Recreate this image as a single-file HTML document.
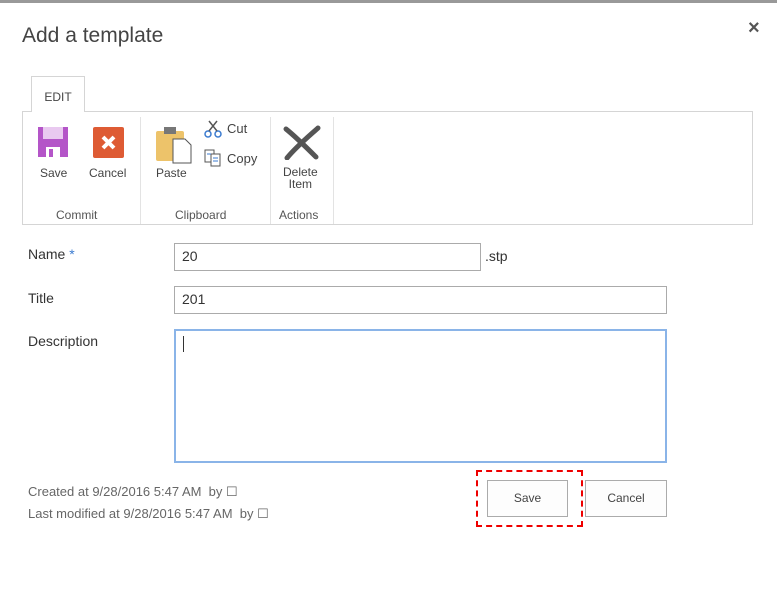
<!DOCTYPE html>
<html><head><style>
body{margin:0;width:777px;height:600px;background:#fff;font-family:"Liberation Sans",sans-serif;position:relative;overflow:hidden;color:#444}
.a{position:absolute}
.t{font-size:12px;color:#444}
.lbl{font-size:14px;color:#333}
.inp{position:absolute;border:1px solid #ababab;background:#fff;box-sizing:border-box;font-size:14px;color:#333;padding:4px 7px}
.btn{position:absolute;border:1px solid #ababab;background:#fdfdfd;box-sizing:border-box;font-size:12px;color:#444;text-align:center;line-height:34px}
</style></head><body>
<div class="a" style="left:0;top:0;width:777px;height:3px;background:#999"></div>
<div class="a" style="left:22px;top:24px;font-size:21px;color:#444">Add a template</div>
<div class="a" style="left:748px;top:17px;font-size:20px;color:#555;font-weight:bold">×</div>
<div class="a" style="left:22px;top:111px;width:731px;height:114px;border:1px solid #d5d5d5;box-sizing:border-box"></div>
<div class="a" style="left:31px;top:76px;width:54px;height:36px;border:1px solid #d5d5d5;border-bottom:none;background:#fff;box-sizing:border-box;font-size:12px;text-align:center;line-height:40px;color:#444">EDIT</div>
<div class="a" style="left:140px;top:117px;width:1px;height:107px;background:#e3e3e3"></div>
<div class="a" style="left:270px;top:117px;width:1px;height:107px;background:#e3e3e3"></div>
<div class="a" style="left:333px;top:117px;width:1px;height:107px;background:#e3e3e3"></div>
<svg class="a" style="left:37px;top:126px" width="32" height="32"><rect x="1" y="1" width="30" height="30" fill="#b455c8"/><rect x="6" y="1" width="20" height="12" fill="#e9c9f0"/><rect x="9" y="21" width="14" height="10" fill="#fff"/><rect x="12" y="23" width="4" height="8" fill="#b455c8"/></svg>
<svg class="a" style="left:93px;top:127px" width="31" height="31"><rect width="31" height="31" rx="2" fill="#de5b34"/><path d="M10 10L21 21M21 10L10 21" stroke="#fff" stroke-width="4"/></svg>
<div class="a t" style="left:40px;top:166px">Save</div>
<div class="a t" style="left:89px;top:166px">Cancel</div>
<div class="a t" style="left:56px;top:208px;color:#555">Commit</div>
<svg class="a" style="left:155px;top:124px" width="40" height="40"><rect x="1" y="7" width="28" height="30" rx="2" fill="#edc36a"/><rect x="9" y="3" width="12" height="7" fill="#777"/><path d="M18 15h12l6 6v18H18z" fill="#fff" stroke="#555"/></svg>
<div class="a t" style="left:156px;top:166px">Paste</div>
<svg class="a" style="left:204px;top:120px" width="18" height="18"><circle cx="4" cy="14" r="3" fill="none" stroke="#3b7bd0" stroke-width="1.5"/><circle cx="14" cy="14" r="3" fill="none" stroke="#3b7bd0" stroke-width="1.5"/><path d="M5 11L13 1M13 11L5 1" stroke="#555" stroke-width="1.5"/></svg>
<div class="a" style="left:227px;top:121px;font-size:13px">Cut</div>
<svg class="a" style="left:204px;top:149px" width="18" height="18"><rect x="1" y="1" width="9" height="12" fill="#fff" stroke="#555"/><rect x="7" y="5" width="9" height="12" fill="#fff" stroke="#555"/><path d="M9 9h5M9 12h5M3 5h4" stroke="#3b7bd0"/></svg>
<div class="a" style="left:227px;top:151px;font-size:13px">Copy</div>
<div class="a t" style="left:175px;top:208px;color:#555">Clipboard</div>
<svg class="a" style="left:282px;top:125px" width="40" height="35"><path d="M4 4C14 12 24 22 34 32M36 3C26 12 14 22 5 33" stroke="#555" stroke-width="5" fill="none" stroke-linecap="round"/></svg>
<div class="a t" style="left:283px;top:166px;line-height:12px;text-align:center">Delete<br>Item</div>
<div class="a t" style="left:279px;top:208px;color:#555">Actions</div>
<div class="a lbl" style="left:28px;top:246px">Name <span style="color:#3b7bd0">*</span></div>
<div class="inp" style="left:174px;top:243px;width:307px;height:28px">20</div>
<div class="a lbl" style="left:485px;top:248px">.stp</div>
<div class="a lbl" style="left:28px;top:290px">Title</div>
<div class="inp" style="left:174px;top:286px;width:493px;height:28px">201</div>
<div class="a lbl" style="left:28px;top:333px">Description</div>
<div class="inp" style="left:174px;top:329px;width:493px;height:134px;border:2px solid #8ab4e8"><div style="width:1px;height:16px;background:#333;margin-top:1px"></div></div>
<div class="a" style="left:28px;top:484px;font-size:13px;color:#666">Created at 9/28/2016 5:47 AM &nbsp;by ☐</div>
<div class="a" style="left:28px;top:506px;font-size:13px;color:#666">Last modified at 9/28/2016 5:47 AM &nbsp;by ☐</div>
<div class="a" style="left:476px;top:470px;width:107px;height:57px;border:2px dashed #e00;box-sizing:border-box"></div>
<div class="btn" style="left:487px;top:480px;width:81px;height:37px">Save</div>
<div class="btn" style="left:585px;top:480px;width:82px;height:37px">Cancel</div>
</body></html>
